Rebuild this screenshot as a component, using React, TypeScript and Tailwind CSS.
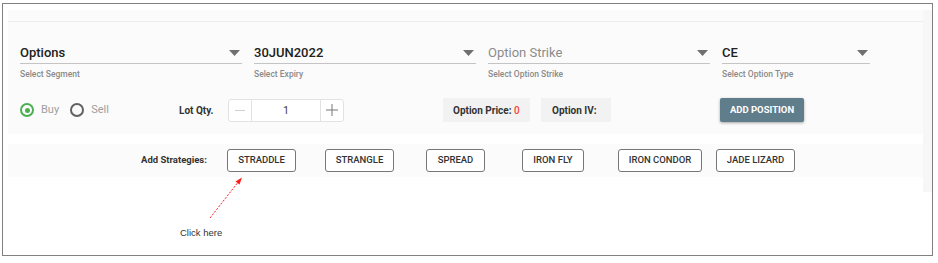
import React from "react";

const dropdowns = [
  { value: "Options", helper: "Select Segment", width: "w-[222px]", placeholder: false },
  { value: "30JUN2022", helper: "Select Expiry", width: "w-[222px]", placeholder: false },
  { value: "Option Strike", helper: "Select Option Strike", width: "w-[222px]", placeholder: true },
  { value: "CE", helper: "Select Option Type", width: "w-[148px]", placeholder: false },
];

const strategies = [
  { label: "STRADDLE", className: "w-[69px]" },
  { label: "STRANGLE", className: "ml-[29px] w-[69px]" },
  { label: "SPREAD", className: "ml-[32px] w-[59px]" },
  { label: "IRON FLY", className: "ml-[37px] w-[62px]" },
  { label: "IRON CONDOR", className: "ml-[34px] w-[84px]" },
  { label: "JADE LIZARD", className: "ml-[14px] w-[79px]" },
];

const Select = ({ value, helper, width, placeholder }) => (
  <div className={`${width} flex flex-col`}>
    <div className="flex h-[21px] items-center justify-between border-b border-[#c4c4c4] pr-[2px]">
      <span
        className={
          placeholder
            ? "text-[13px] text-[#8c8c8c]"
            : "text-[13px] font-medium text-[#212121]"
        }
      >
        {value}
      </span>
      <svg width="11" height="6" viewBox="0 0 11 6">
        <path d="M0 0 L11 0 L5.5 6 Z" fill="#707070" />
      </svg>
    </div>
    <span className="mt-[4px] text-[8.5px] font-medium leading-[12px] text-[#8a8a8a]">
      {helper}
    </span>
  </div>
);

const Radio = ({ label, checked }) => (
  <div className="flex items-center gap-[7px]">
    <span
      className={
        checked
          ? "flex h-[14px] w-[14px] items-center justify-center rounded-full border-2 border-[#4caf50]"
          : "flex h-[14px] w-[14px] items-center justify-center rounded-full border-2 border-[#616161]"
      }
    >
      {checked && <span className="h-[5px] w-[5px] rounded-full bg-[#4caf50]" />}
    </span>
    <span className="text-[11px] text-[#9e9e9e]">{label}</span>
  </div>
);

export default function App() {
  return (
    <div
      className="h-[263px] w-[938px] bg-white pl-[2px] pt-[3px]"
      style={{ fontFamily: "Roboto, 'Liberation Sans', sans-serif" }}
    >
      <div className="relative flex h-[253px] w-[931px] flex-col border border-[#808080]">
        <div className="mt-[6px] flex">
          <div className="ml-[5px] flex w-[915px] flex-col">
            {/* main panel */}
            <div className="flex flex-col bg-[#fbfbfb] pb-[12px]">
              <div className="h-[12px] border-b border-[#ececec]" />
              <div className="mt-[21px] flex gap-[12px] pl-[12px]">
                {dropdowns.map((d) => (
                  <Select key={d.helper} {...d} />
                ))}
              </div>
              <div className="mt-[18px] flex h-[24px] items-center pl-[12px]">
                <div className="flex w-[159px] items-center gap-[11px]">
                  <Radio label="Buy" checked />
                  <Radio label="Sell" checked={false} />
                </div>
                <span className="w-[49px] text-[10px] font-bold text-[#333]">Lot Qty.</span>
                <div className="flex h-[23px] w-[116px] rounded-[3px] border border-[#e2e2e2] bg-white">
                  <div className="flex w-[23px] items-center justify-center border-r border-[#e2e2e2]">
                    <span className="h-px w-[10px] bg-[#d0d0d0]" />
                  </div>
                  <div className="flex flex-1 items-center justify-center text-[10px] text-[#333]">1</div>
                  <div className="flex w-[23px] items-center justify-center border-l border-[#e2e2e2]">
                    <svg width="12" height="12" viewBox="0 0 12 12">
                      <path d="M6 0 V12 M0 6 H12" stroke="#777" strokeWidth="1" />
                    </svg>
                  </div>
                </div>
                <div className="ml-[99px] flex h-[24px] w-[87px] items-center bg-[#f2f2f2] pl-[10px] text-[10px] font-bold text-[#333]">
                  Option Price:&nbsp;<span className="font-medium text-[#f44336]">0</span>
                </div>
                <div className="ml-[11px] flex h-[24px] w-[70px] items-center bg-[#f2f2f2] pl-[11px] text-[10px] font-bold text-[#333]">
                  Option IV:
                </div>
                <button className="ml-[109px] flex h-[24px] w-[84px] items-center justify-center rounded-[2px] bg-[#5f7d8b] text-[9.5px] font-bold text-white shadow-[0_1px_3px_rgba(0,0,0,0.35)]">
                  ADD POSITION
                </button>
              </div>
            </div>
            {/* strategies */}
            <div className="mt-[10px] flex h-[33px] items-center bg-[#fbfbfb]">
              <span className="ml-[133px] w-[86px] text-[9.5px] font-bold text-[#333]">Add Strategies:</span>
              {strategies.map((s) => (
                <button
                  key={s.label}
                  className={`${s.className} flex h-[23px] items-center justify-center rounded-[3px] border border-[#777] bg-white text-[9.5px] font-medium text-[#333]`}
                >
                  {s.label}
                </button>
              ))}
            </div>
          </div>
          <div className="h-[182px] w-[9px] bg-[#f7f7f7]" />
        </div>
        <span
          className="ml-[177px] mt-[35px] text-[9.5px] leading-[12px] text-[#333]"
          style={{ fontFamily: "'Liberation Sans', Arial, sans-serif" }}
        >
          Click here
        </span>
        <svg
          className="absolute left-[200px] top-[170px]"
          width="50"
          height="50"
          viewBox="0 0 50 50"
        >
          <path d="M7 44 L36 7" stroke="#ff1a1a" strokeWidth="1" strokeDasharray="2 1.5" fill="none" />
          <path d="M39 3.5 L36.5 10.5 L32.5 7.5 Z" fill="#ff1a1a" />
        </svg>
      </div>
    </div>
  );
}
